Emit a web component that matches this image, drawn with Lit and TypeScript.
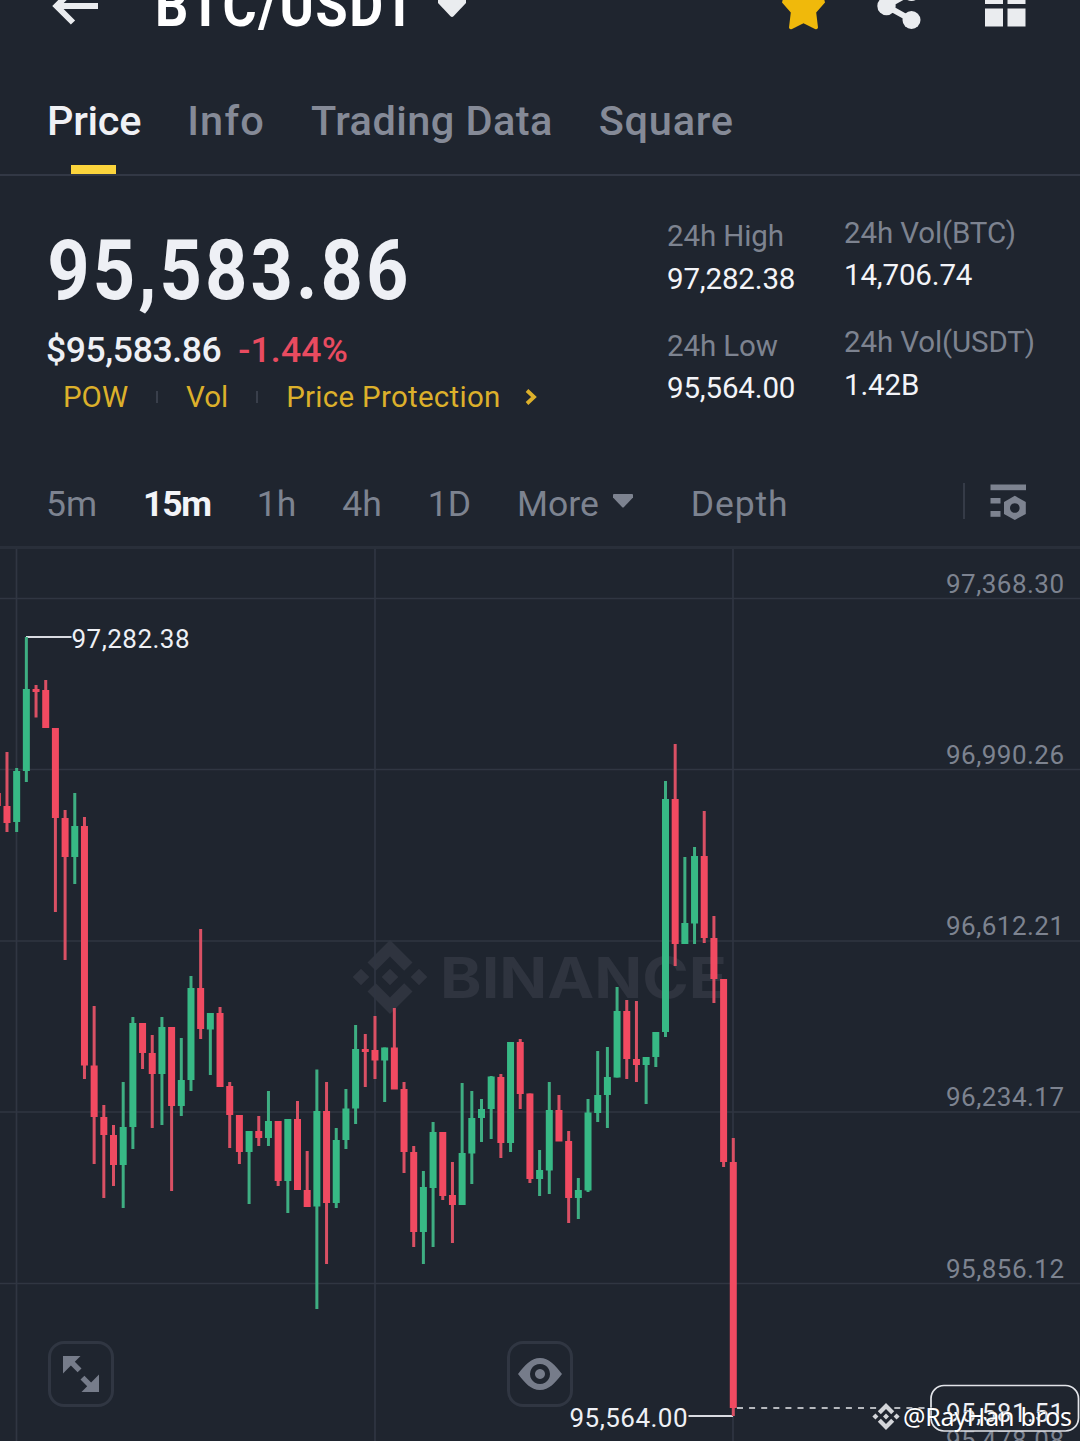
import { LitElement, html, svg, css } from "lit";
import { customElement, property } from "lit/decorators.js";
import { classMap } from "lit/directives/class-map.js";

type Dir = "up" | "down";
/** direction, high, low, body top, body bottom (vertical chart coordinates) */
type Candle = [Dir, number, number, number, number];

const U: Dir = "up";
const D: Dir = "down";

const CANDLES: Candle[] = [
  [D, 793, 806, 793, 806],
  [D, 752, 832, 806, 823],
  [U, 768, 832, 771, 822],
  [U, 637, 782, 689, 771],
  [D, 685, 717.5, 689, 692],
  [D, 680, 728, 690, 728],
  [D, 728, 912, 728, 818],
  [D, 810, 960, 818, 857],
  [U, 793, 884, 826, 857],
  [D, 817, 1079, 826, 1065.5],
  [D, 1006, 1164, 1065.5, 1117],
  [D, 1105, 1198, 1117, 1135],
  [D, 1125, 1186, 1135, 1165],
  [U, 1082, 1208, 1127, 1165],
  [U, 1017, 1149, 1023, 1127],
  [D, 1023, 1069, 1023, 1053],
  [D, 1035, 1128, 1053, 1074],
  [U, 1017, 1125, 1027, 1074],
  [D, 1027, 1191, 1027, 1106],
  [U, 1038, 1116, 1080, 1106],
  [U, 976, 1091, 988, 1080],
  [D, 929, 1039, 988, 1029],
  [U, 1013, 1075, 1013, 1029.5],
  [D, 1007, 1087, 1013, 1087],
  [D, 1082, 1148, 1086, 1115],
  [D, 1115, 1164, 1115, 1152],
  [U, 1131, 1204, 1131, 1152],
  [D, 1116, 1146, 1131, 1138],
  [U, 1091, 1146, 1121, 1138],
  [D, 1121, 1186, 1121, 1181],
  [U, 1119, 1213, 1119, 1181],
  [D, 1101, 1190, 1119, 1190],
  [D, 1151, 1207, 1190, 1207],
  [U, 1069.5, 1309, 1111, 1206.5],
  [D, 1082, 1264, 1111, 1203],
  [U, 1128, 1208, 1140, 1203],
  [U, 1089, 1149, 1108.5, 1140],
  [U, 1025, 1124, 1049, 1108.5],
  [D, 1034, 1087, 1049, 1052],
  [D, 1016, 1079, 1050, 1060.5],
  [U, 1047.5, 1102, 1047.5, 1060.5],
  [D, 1008, 1089, 1047.5, 1089.5],
  [D, 1082, 1173, 1089, 1152],
  [D, 1146, 1247, 1152, 1232],
  [U, 1171, 1264, 1187, 1232],
  [U, 1122, 1247, 1132, 1188],
  [D, 1132, 1200, 1132, 1196],
  [D, 1162, 1243, 1195, 1205],
  [U, 1083, 1205, 1153, 1205],
  [U, 1091, 1184, 1118, 1153.5],
  [U, 1099, 1142, 1109, 1118],
  [U, 1076, 1139, 1076.5, 1109],
  [D, 1074, 1158, 1077, 1143],
  [U, 1042, 1152, 1042, 1143],
  [D, 1039, 1109, 1042, 1094],
  [D, 1093.5, 1183, 1093.5, 1179],
  [U, 1150, 1196, 1170, 1179],
  [U, 1082, 1194, 1110, 1170.5],
  [D, 1095, 1141, 1110, 1141.5],
  [D, 1131, 1223, 1141, 1198],
  [U, 1178, 1219, 1190, 1198],
  [U, 1099, 1192, 1112.5, 1190.5],
  [U, 1051, 1122, 1095, 1113],
  [U, 1047, 1128, 1077, 1095],
  [U, 987, 1077.5, 1011, 1077.5],
  [D, 1000, 1079, 1011, 1059],
  [D, 1001, 1082, 1059, 1065],
  [U, 1057, 1104, 1057, 1065],
  [U, 1032, 1067, 1032, 1057],
  [U, 781, 1037, 799, 1032],
  [D, 744, 966, 799, 944],
  [U, 857, 944, 923, 944],
  [U, 847, 944, 856, 923.5],
  [D, 811, 943, 856, 938],
  [D, 916, 1003, 938, 979],
  [D, 979, 1167, 979, 1162],
  [D, 1138, 1416, 1162, 1408],
];

const STEP = 9.684;
const FIRST_X = -2.7;

const PRICE_LINES: [string, number, number][] = [
  ["97,368.30", 598.5, 593],
  ["96,990.26", 769.5, 764],
  ["96,612.21", 941, 935],
  ["96,234.17", 1112, 1106],
  ["95,856.12", 1283.5, 1278],
];
const TIME_LINES = [16.5, 375, 733];

/** Binance mark centred on the origin, 74 units wide. */
const mark = svg`
  <path d="M0 -37 L22.5 -14.5 L14.2 -6.2 L0 -20.4 L-14.2 -6.2 L-22.5 -14.5 Z"/>
  <path d="M0 37 L22.5 14.5 L14.2 6.2 L0 20.4 L-14.2 6.2 L-22.5 14.5 Z"/>
  <path d="M0 -8.3 L8.3 0 L0 8.3 L-8.3 0 Z"/>
  <path d="M-29 -8.3 L-20.7 0 L-29 8.3 L-37.3 0 Z"/>
  <path d="M29 -8.3 L37.3 0 L29 8.3 L20.7 0 Z"/>`;

@customElement("market-header")
export class MarketHeader extends LitElement {
  static styles = css`
    :host {
      display: flex;
      align-items: center;
      height: 80px;
      margin-top: -34px;
      padding: 0 54px 0 52px;
      color: #fff;
    }
    svg { display: block; flex: none; }
    .back { margin-right: 56px; }
    .pair {
      width: 257px;
      font: 700 60px/80px Roboto, "Liberation Sans", sans-serif;
      white-space: nowrap;
    }
    .pair span {
      display: inline-block;
      letter-spacing: 1.9px;
      transform: scaleX(0.87);
      transform-origin: 0 50%;
    }
    .drop { margin-left: 26px; }
    .actions { display: flex; align-items: center; margin-left: auto; }
    .share { margin: 0 64px 0 51px; }
  `;
  render() {
    return html`
      <svg class="back" width="47" height="40" viewBox="0 0 47 40">
        <path d="M46 20 H5 M21 3.500 L4.500 20 L21 36.500" fill="none" stroke="#eaecef" stroke-width="6" />
      </svg>
      <div class="pair"><span>BTC/USDT</span></div>
      <svg class="drop" width="28" height="40" viewBox="0 0 28 40">
        <path d="M2 9 H26 Q28 9 28 11 V17 L15.500 30.300 Q14 31.600 12.500 30.300 L0 17 V11 Q0 9 2 9Z" fill="#eaecef" />
      </svg>
      <div class="actions">
        <svg width="45" height="50" viewBox="0 0 45 50">
          <path
            d="M22.500 3 L28.500 15.500 L43 17.500 L44 21.500 L35.200 31.500 L37 46.500 Q36.500 49 34 48 L22.500 42.200 L11 48 Q8.300 49 8 46.500 L9.800 31.500 L1 21.500 L2 17.500 L16.500 15.500Z"
            fill="#f0b90b"
          />
        </svg>
        <svg class="share" width="44" height="48" viewBox="0 0 44 48">
          <path d="M34.500 10 L9.500 24 L34.500 38" fill="none" stroke="#eaecef" stroke-width="6" />
          <circle cx="34.500" cy="10" r="9" fill="#eaecef" />
          <circle cx="9.500" cy="24" r="9.200" fill="#eaecef" />
          <circle cx="34.500" cy="38" r="9" fill="#eaecef" />
        </svg>
        <svg width="41" height="42" viewBox="0 0 41 42" fill="#eaecef">
          <rect width="18" height="18" y="1" />
          <rect x="22.500" width="18" height="18" y="1" />
          <rect y="23.500" width="18" height="18" />
          <rect x="22.500" y="23.500" width="18" height="18" />
        </svg>
      </div>
    `;
  }
}

@customElement("market-tabs")
export class MarketTabs extends LitElement {
  static styles = css`
    :host {
      display: flex;
      gap: 46px;
      height: 128px;
      padding-left: 47px;
      border-bottom: 2px solid #323845;
      font: 500 41.5px/50px Roboto, "Liberation Sans", sans-serif;
    }
    .tab {
      display: flex;
      flex-direction: column;
      align-items: center;
      justify-content: space-between;
      padding-top: 50px;
      white-space: nowrap;
      color: #858a97;
    }
    .active { color: #f0f1f5; }
    .active::after {
      content: "";
      width: 45px;
      height: 9px;
      margin-right: 2px;
      background: #fbd43c;
    }
    .price { letter-spacing: -0.3px; }
    .info { letter-spacing: 1.2px; }
    .data { letter-spacing: 0.42px; }
    .square { letter-spacing: 0.75px; }
  `;
  render() {
    return html`
      <div class="tab active price">Price</div>
      <div class="tab info">Info</div>
      <div class="tab data">Trading Data</div>
      <div class="tab square">Square</div>
    `;
  }
}

@customElement("stat-item")
export class StatItem extends LitElement {
  @property() label = "";
  @property() value = "";
  static styles = css`
    :host {
      display: block;
      font: 400 29.5px/42.5px Roboto, "Liberation Sans", sans-serif;
      white-space: nowrap;
    }
    .label { color: #7d8390; letter-spacing: -0.12px; }
    .value { color: #f3f4f8; letter-spacing: -0.15px; }
  `;
  render() {
    return html`<div class="label">${this.label}</div>
      <div class="value">${this.value}</div>`;
  }
}

@customElement("price-summary")
export class PriceSummary extends LitElement {
  static styles = css`
    :host {
      display: flex;
      height: 284px;
      box-sizing: border-box;
      padding: 37px 0 0 46px;
      font-family: Roboto, "Liberation Sans", sans-serif;
      color: #eef0f5;
      white-space: nowrap;
    }
    .left { width: 621px; }
    .last {
      padding-left: 1.5px;
      font-size: 84px;
      line-height: 116px;
      font-weight: 700;
      letter-spacing: 3.5px;
      transform: scaleX(0.88);
      transform-origin: 0 50%;
    }
    .sub { display: flex; gap: 17px; font-size: 35.5px; line-height: 42px; font-weight: 500; letter-spacing: -0.4px; }
    .change { color: #e94b60; letter-spacing: 0.2px; }
    .tags {
      display: flex;
      align-items: center;
      padding-left: 17px;
      margin-top: 4px;
      font-size: 29.5px;
      line-height: 44px;
      color: #dcb02b;
    }
    .tags i { width: 2px; height: 12px; margin: 0 28px; background: #393f4b; }
    .tags svg { margin: -1px 0 0 24px; }
    .protect { letter-spacing: 0.27px; }
    .stats { display: flex; gap: 49px; }
    .col { display: flex; flex-direction: column; gap: 24.5px; margin-top: -1.5px; }
    .first { width: 128px; margin-top: 2px; }
  `;
  render() {
    return html`
      <div class="left">
        <div class="last">95,583.86</div>
        <div class="sub"><span>$95,583.86</span><span class="change">-1.44%</span></div>
        <div class="tags">
          <span>POW</span><i></i><span>Vol</span><i></i><span class="protect">Price Protection</span>
          <svg width="12" height="16" viewBox="0 0 12 16">
            <path d="M2 1.500 L9 8 L2 14.500" fill="none" stroke="#dcb02b" stroke-width="3.800" />
          </svg>
        </div>
      </div>
      <div class="stats">
        <div class="col first">
          <stat-item label="24h High" value="97,282.38"></stat-item>
          <stat-item label="24h Low" value="95,564.00"></stat-item>
        </div>
        <div class="col">
          <stat-item label="24h Vol(BTC)" value="14,706.74"></stat-item>
          <stat-item label="24h Vol(USDT)" value="1.42B"></stat-item>
        </div>
      </div>
    `;
  }
}

@customElement("interval-bar")
export class IntervalBar extends LitElement {
  static styles = css`
    :host {
      display: flex;
      align-items: center;
      height: 86px;
      padding: 0 54px 0 46px;
      border-bottom: 3px solid #292f3a;
      font: 400 35.5px/44px Roboto, "Liberation Sans", sans-serif;
      color: #7d8390;
      white-space: nowrap;
    }
    .items { display: flex; gap: 46px; padding-top: 2px; }
    .active { color: #f3f4f8; font-weight: 700; letter-spacing: -1.3px; }
    .more { display: flex; align-items: center; gap: 14px; }
    .more svg { margin-top: -6px; }
    .depth { margin-left: 58px; padding-top: 2px; letter-spacing: 0.9px; }
    .rule { width: 2px; height: 36px; margin: 0 0 4px auto; background: #353b47; }
    .settings { margin: 0 0 2px 25px; }
  `;
  render() {
    const items = ["5m", "15m", "1h", "4h", "1D"];
    return html`
      <div class="items">
        ${items.map((t) => html`<span class=${classMap({ active: t === "15m" })}>${t}</span>`)}
        <span class="more">
          More
          <svg width="20" height="14" viewBox="0 0 20 14">
            <path d="M1 0 H19 Q20 0 20 1 V3.500 L11 13 Q10 14 9 13 L0 3.500 V1 Q0 0 1 0Z" fill="#7d8390" />
          </svg>
        </span>
      </div>
      <span class="depth">Depth</span>
      <span class="rule"></span>
      <svg class="settings" width="36" height="36" viewBox="0 0 36 36" fill="#7d8390">
        <rect x="0.500" width="35.500" height="5.700" y="0.500" />
        <rect x="0.500" y="14" width="10" height="5.500" />
        <rect x="0.500" y="27" width="10" height="5.800" />
        <path
          fill-rule="evenodd"
          d="M24.800 11.800 L35.800 18 V30 L24.800 36 L14 30 V18Z M24.800 19.200 a4.800 4.800 0 1 0 0.010 0Z"
        />
      </svg>
    `;
  }
}

@customElement("candle-chart")
export class CandleChart extends LitElement {
  static styles = css`
    :host { display: block; position: relative; height: 892px; }
    svg { display: block; }
    .grid { stroke: #303642; stroke-width: 1.7; }
    .brand { fill: #2f343f; }
    .brand text { font: 700 57px Inter, "Open Sans", sans-serif; }
    .up { fill: #37b985; }
    .down { fill: #f14a61; }
    .up .wick { fill: #3eae82; }
    .down .wick { fill: #d95064; }
    .num { font: 400 26px Roboto, "Liberation Sans", sans-serif; }
    .axis { fill: #7d8390; }
    .mark { fill: #eef0f5; }
    .lead { stroke: #d9dbe1; stroke-width: 2; }
    .dash { stroke: #e6e8ec; stroke-width: 1.6; stroke-dasharray: 6 6.1; }
    .tag { fill: #1f252f; stroke: #e2e4e9; stroke-width: 1.7; }
    .user {
      fill: #fff;
      font: 400 25px "Noto Sans", "Open Sans", sans-serif;
      paint-order: stroke;
      stroke: rgba(20, 24, 32, 0.35);
      stroke-width: 1.5;
    }
    .logo { fill: #d3d5d9; }
    .tool {
      position: absolute;
      top: 792px;
      box-sizing: border-box;
      width: 66px;
      height: 66px;
      border: 3px solid #303642;
      border-radius: 16px;
      display: grid;
      place-items: center;
    }
    .expand { left: 48px; }
    .eye { left: 507px; }
  `;
  private candle([dir, high, low, top, bottom]: Candle, i: number) {
    const x = FIRST_X + STEP * i;
    return svg`<g class=${dir}>
      <rect class="wick" x=${x - 1.5} y=${high} width="3" height=${low - high}></rect>
      <rect x=${x - 3.5} y=${top} width="7" height=${bottom - top}></rect>
    </g>`;
  }
  render() {
    return html`
      <svg width="1080" height="892" viewBox="0 549 1080 892">
        <g class="brand">
          <g transform="translate(390 977)">${mark}</g>
          <text x="440" y="998" textLength="287" lengthAdjust="spacingAndGlyphs">BINANCE</text>
        </g>
        <g class="grid">
          ${PRICE_LINES.map(([, y]) => svg`<line x1="0" x2="1080" y1=${y} y2=${y}></line>`)}
          ${TIME_LINES.map((x) => svg`<line x1=${x} x2=${x} y1="549" y2="1441"></line>`)}
        </g>
        <path d="M26 637 H71.500" class="lead" />
        <path d="M688.500 1416 H733" class="lead" />
        ${CANDLES.map((c, i) => this.candle(c, i))}
        <path d="M737 1408 H930" class="dash" />
        <g class="num axis">
          ${PRICE_LINES.map(([t, , y]) => svg`<text x="946" y=${y} textLength="118">${t}</text>`)}
          <text x="946" y="1449" textLength="118">95,478.08</text>
        </g>
        <g class="num mark">
          <text x="71.500" y="648" textLength="118">97,282.38</text>
          <text x="569.500" y="1427" textLength="118">95,564.00</text>
        </g>
        <rect class="tag" x="931" y="1385.500" width="147.500" height="45.500" rx="13" />
        <text class="num mark" x="946" y="1422" textLength="118">95,581.51</text>
        <g class="logo" transform="translate(886 1416.500) scale(.365)">${mark}</g>
        <text class="user" x="903" y="1426" textLength="169">@RayHan bros</text>
      </svg>
      <div class="tool expand">
        <svg width="38" height="38" viewBox="0 0 38 38" fill="#767c8a">
          <path d="M1 1 H18.500 L12.800 6.700 L19.500 13.400 L15.600 17.300 L8.900 10.600 L1 18.500Z" />
          <path d="M37 37 H19.500 L25.200 31.300 L18.500 24.600 L22.400 20.700 L29.100 27.400 L37 19.500Z" />
        </svg>
      </div>
      <div class="tool eye">
        <svg width="44" height="34" viewBox="0 0 44 34">
          <path
            fill="#767c8a"
            fill-rule="evenodd"
            d="M0 17 C7 8 13 1 22 1 C31 1 37 8 44 17 C37 26 31 33 22 33 C13 33 7 26 0 17Z M22 7 a10 10 0 1 0 0.010 0Z M22 12 a5 5 0 1 1 -0.010 0Z"
          />
        </svg>
      </div>
    `;
  }
}

@customElement("app-root")
export class AppRoot extends LitElement {
  static styles = css`
    :host {
      display: flex;
      flex-direction: column;
      width: 1080px;
      height: 1441px;
      overflow: hidden;
      background: #1f252f;
    }
    :host > * { flex: none; }
  `;
  render() {
    return html`
      <market-header></market-header>
      <market-tabs></market-tabs>
      <price-summary></price-summary>
      <interval-bar></interval-bar>
      <candle-chart></candle-chart>
    `;
  }
}
